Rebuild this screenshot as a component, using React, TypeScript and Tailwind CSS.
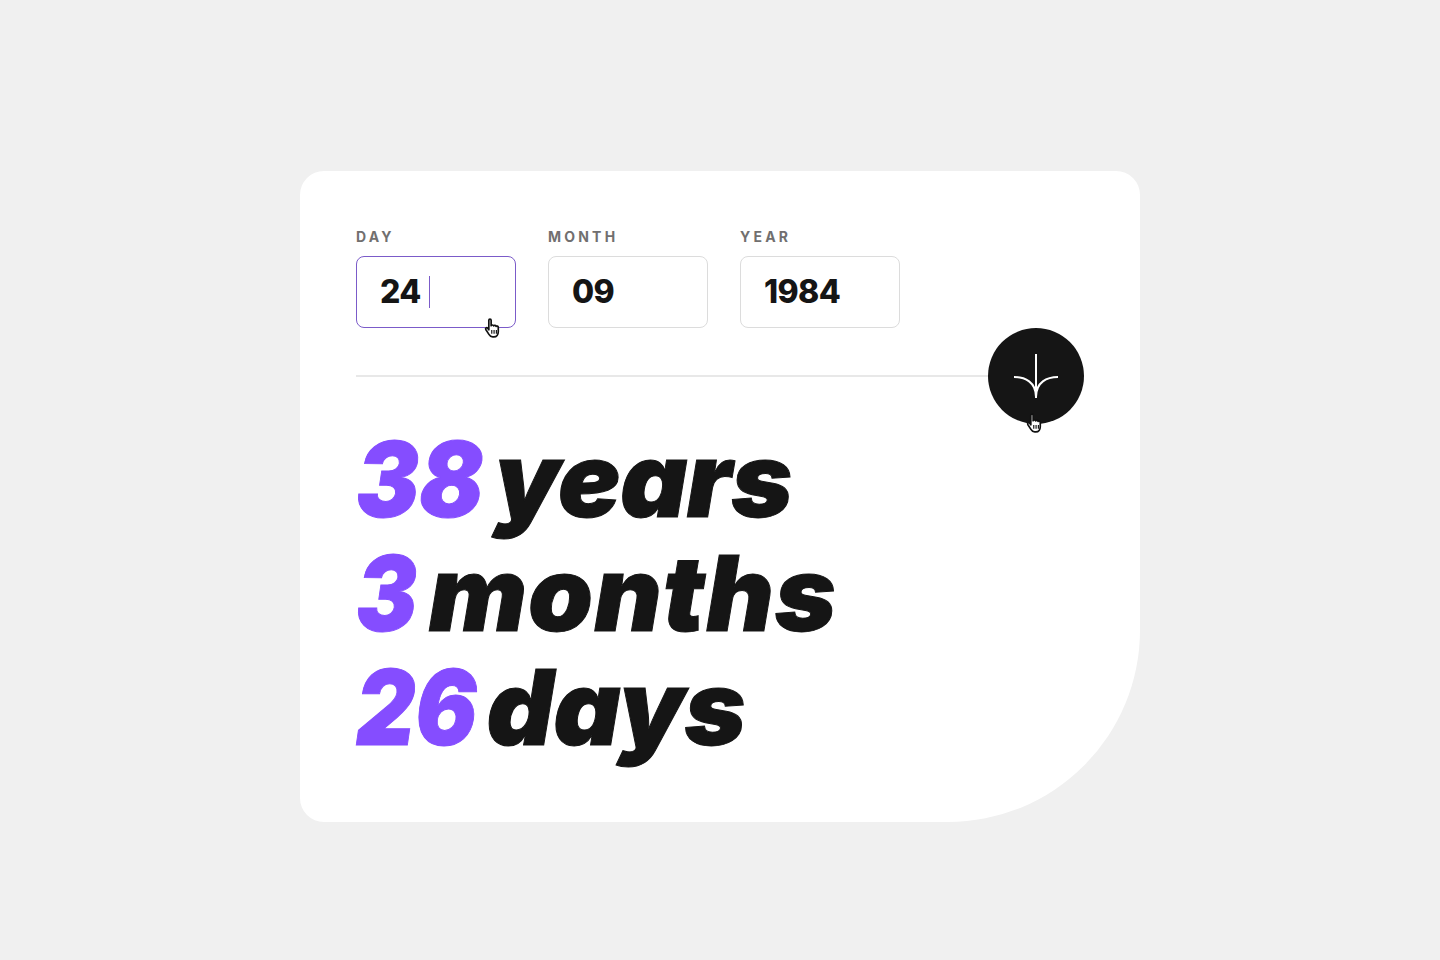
import React from "react";

const Hand = ({ className }: { className: string }) => (
  <svg viewBox="0 0 16 20" width="17" height="21" className={className}>
    <path d="M4.5 2.2c0-1.5 2.2-1.5 2.2 0v5.2c.3-1 2.2-1 2.4.2.4-.9 2.2-.8 2.3.4.6-.7 2.1-.4 2.1.9v4.3c0 2.5-1.5 4.8-4.2 4.8H8.2c-1.8 0-2.8-1-3.6-2.4L1.6 10.9c-.7-1.3.9-2.2 1.8-1.1l1.1 1.4z" fill="#fff" stroke="#111" strokeWidth="1.6" strokeLinejoin="round" />
    <path d="M7.3 11.5v3.6M9.5 11.5v3.6M11.7 11.5v3.6" stroke="#111" strokeWidth="1.1" />
  </svg>
);

const Field = ({ label, value, active }: { label: string; value: string; active?: boolean }) => (
  <div className="flex w-[160px] flex-col gap-[9px]">
    <span className="text-[14px] leading-[20px] font-bold tracking-[3.2px] text-[#716f6f]">{label}</span>
    <div className={`relative flex h-[72px] items-center rounded-lg border px-[23px] text-[32px] font-extrabold tracking-[-0.6px] text-[#151515] ${active ? "border-[#7b5bc9]" : "border-[#dcdcdc]"}`}>
      {value}
      {active && (
        <>
          <span className="ml-[8px] h-[32px] w-px bg-[#7b5bc9]" />
          <Hand className="absolute right-[14px] bottom-[-12px]" />
        </>
      )}
    </div>
  </div>
);

const Row = ({ n, unit, numClass, unitClass }: { n: string; unit: string; numClass: string; unitClass: string }) => (
  <div className="flex">
    <span className={`origin-left text-[#854dff] ${numClass}`}>{n}</span>
    <span className={unitClass}>{unit}</span>
  </div>
);

export default function App() {
  return (
    <div className="flex h-[960px] w-full justify-center bg-[#f0f0f0] pt-[171px] font-['Inter','Liberation_Sans',sans-serif]">
      <div className="h-[651px] w-[840px] rounded-[24px] rounded-br-[192px] bg-white p-[56px]">
        <div className="flex gap-[32px]">
          <Field label="DAY" value="24" active />
          <Field label="MONTH" value="09" />
          <Field label="YEAR" value="1984" />
        </div>
        <div className="relative flex h-[96px] items-center">
          <div className="h-[2px] flex-1 bg-[#e8e8e8]" />
          <button className="relative flex h-[96px] w-[96px] items-center justify-center rounded-full bg-[#151515]">
            <svg viewBox="0 0 46 44" width="46" height="44" fill="none" stroke="#fff" strokeWidth="2">
              <path d="M23 0v44" />
              <path d="M1 23c11 0 22 5 22 20M45 23c-11 0-22 5-22 20" />
            </svg>
            <Hand className="absolute bottom-[-10px] left-[38px]" />
          </button>
        </div>
        <div className="-mt-[2px] text-[104px] leading-[114px] font-black text-[#151515] italic [-webkit-text-stroke:1px_currentColor]">
          <Row n="38" unit="years" numClass="scale-x-[0.91]" unitClass="-ml-[2px] tracking-[-0.5px]" />
          <Row n="3" unit="months" numClass="scale-x-[0.88]" unitClass="ml-[3px] tracking-[1.2px]" />
          <Row n="26" unit="days" numClass="scale-x-[0.88]" unitClass="-ml-[7px]" />
        </div>
      </div>
    </div>
  );
}
